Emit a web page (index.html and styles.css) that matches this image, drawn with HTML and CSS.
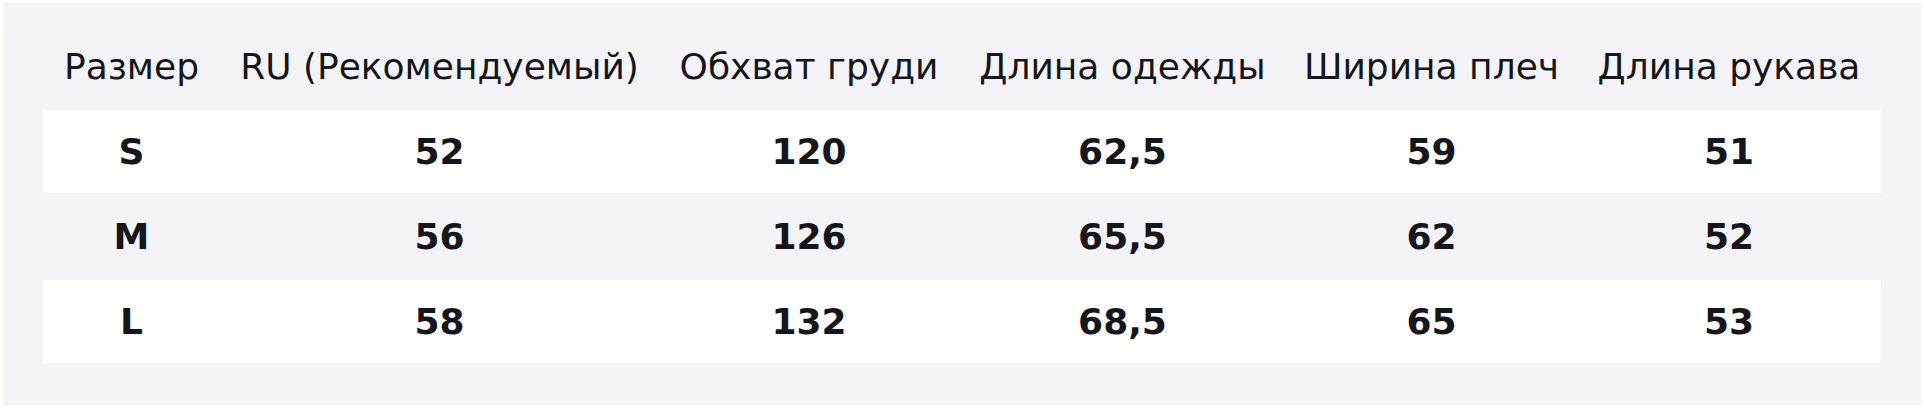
FILE: index.html
```html
<!DOCTYPE html>
<html lang="ru">
<head>
<meta charset="utf-8">
<title>Таблица размеров</title>
<link rel="stylesheet" href="styles.css">
</head>
<body>
<div class="size-chart">
  <table class="size-table">
    <colgroup>
      <col class="c1"><col class="c2"><col class="c3"><col class="c4"><col class="c5"><col class="c6">
    </colgroup>
    <thead>
      <tr>
        <th>Размер</th>
        <th>RU (Рекомендуемый)</th>
        <th>Обхват груди</th>
        <th>Длина одежды</th>
        <th>Ширина плеч</th>
        <th>Длина рукава</th>
      </tr>
    </thead>
    <tbody>
      <tr class="row-light"><td>S</td><td>52</td><td>120</td><td>62,5</td><td>59</td><td>51</td></tr>
      <tr class="row-tint"><td>M</td><td>56</td><td>126</td><td>65,5</td><td>62</td><td>52</td></tr>
      <tr class="row-light"><td>L</td><td>58</td><td>132</td><td>68,5</td><td>65</td><td>53</td></tr>
    </tbody>
  </table>
</div>
</body>
</html>
```

FILE: styles.css
```css
html, body {
  background: #ffffff;
}
body {
  margin: 3px;
  font-family: "DejaVu Sans", sans-serif;
  color: #15151c;
}
.size-chart {
  background: #f4f4f8;
  padding: 22px 40px 40px 40px;
}
.size-table {
  width: 100%;
  table-layout: fixed;
  border-collapse: collapse;
}
.c1 { width: 177px; }
.c2 { width: 439px; }
.c3 { width: 300px; }
.c4 { width: 327px; }
.c5 { width: 291px; }
.c6 { width: 304px; }
.size-table th,
.size-table td {
  height: 83px;
  padding: 0;
  text-align: center;
  vertical-align: middle;
  font-size: 36px;
  white-space: nowrap;
}
.size-table th {
  font-weight: normal;
}
.size-table td {
  font-weight: bold;
}
.size-table tr {
  border-bottom: 2px solid #f4f4f8;
}
.row-light td {
  background: #ffffff;
}
.row-tint td {
  background: #f4f4f8;
}
```
